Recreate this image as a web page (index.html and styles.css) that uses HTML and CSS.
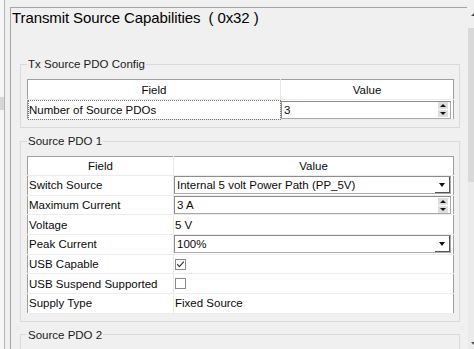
FILE: index.html
```html
<!DOCTYPE html>
<html lang="en">
<head>
    <meta charset="UTF-8">
    <meta name="viewport" content="width=device-width, initial-scale=1.0">
    <title>Transmit Source Capabilities</title>
    <link rel="stylesheet" href="styles.css">
</head>
<body>
    <div class="app">
        <div class="side"><div class="side-sel"></div></div>
        <div class="panel">
            <div class="title">Transmit Source Capabilities  ( 0x32 )</div>

            <fieldset class="group">
                <legend>Tx Source PDO Config</legend>
                <table class="grid grid-config">
                    <tr class="head"><th class="col-field">Field</th><th>Value</th></tr>
                    <tr>
                        <td class="focus">Number of Source PDOs</td>
                        <td class="ctl">
                            <div class="spin">
                                <span class="spin-text">3</span>
                                <span class="spin-btns"><span class="spin-up"></span><span class="spin-down"></span></span>
                            </div>
                        </td>
                    </tr>
                </table>
            </fieldset>

            <fieldset class="group group-next">
                <legend>Source PDO 1</legend>
                <table class="grid grid-pdo">
                    <tr class="head"><th class="col-field">Field</th><th>Value</th></tr>
                    <tr>
                        <td>Switch Source</td>
                        <td class="ctl">
                            <div class="combo">
                                <span class="combo-text">Internal 5 volt Power Path (PP_5V)</span>
                                <span class="combo-btn"></span>
                            </div>
                        </td>
                    </tr>
                    <tr>
                        <td>Maximum Current</td>
                        <td class="ctl">
                            <div class="spin">
                                <span class="spin-text">3 A</span>
                                <span class="spin-btns"><span class="spin-up"></span><span class="spin-down"></span></span>
                            </div>
                        </td>
                    </tr>
                    <tr><td>Voltage</td><td class="val">5 V</td></tr>
                    <tr>
                        <td>Peak Current</td>
                        <td class="ctl">
                            <div class="combo">
                                <span class="combo-text">100%</span>
                                <span class="combo-btn"></span>
                            </div>
                        </td>
                    </tr>
                    <tr>
                        <td>USB Capable</td>
                        <td class="val">
                            <svg class="check" width="11" height="11" viewBox="0 0 11 11">
                                <rect x="0.5" y="0.5" width="10" height="10" fill="#fff" stroke="#8a8a8a"/>
                                <polyline points="2.2,5.2 4.4,7.6 8.8,2.6" fill="none" stroke="#333" stroke-width="1.2"/>
                            </svg>
                        </td>
                    </tr>
                    <tr>
                        <td>USB Suspend Supported</td>
                        <td class="val">
                            <svg class="check" width="11" height="11" viewBox="0 0 11 11">
                                <rect x="0.5" y="0.5" width="10" height="10" fill="#fff" stroke="#8a8a8a"/>
                            </svg>
                        </td>
                    </tr>
                    <tr><td>Supply Type</td><td class="val">Fixed Source</td></tr>
                </table>
            </fieldset>

            <fieldset class="group group-next">
                <legend>Source PDO 2</legend>
            </fieldset>
        </div>
        <div class="scrollbar">
            <div class="sb-up"></div>
            <div class="sb-thumb"></div>
            <div class="sb-track"></div>
            <div class="sb-down"></div>
        </div>
    </div>
</body>
</html>
```

FILE: styles.css
```css
body{
    margin: 0;
    background-color: #f0f0f0;
    font-family: "Liberation Sans", Arial, sans-serif;
    font-size: 11.5px;
    color: #0a0a0a;
    overflow: hidden;
}
.app{
    display: flex;
    height: 349px;
    overflow: hidden;
}
.side{
    width: 4px;
    background-color: #f6f6f6;
    border-right: 1px solid #b4b4b4;
}
.side-sel{
    margin-top: 97px;
    height: 13px;
    background-color: #d6d6d6;
}
.panel{
    flex: 1;
    margin: 7px 0 0 5px;
    border-left: 1px solid #a6a6a6;
    border-top: 1px solid #a6a6a6;
    min-width: 0;
}
.title{
    height: 20px;
    line-height: 20px;
    padding-left: 1px;
    font-size: 15px;
    letter-spacing: -0.1px;
    color: #000;
    white-space: pre;
}
.group{
    margin: 29px 7px 0 9px;
    padding: 8px 5px 7px 6px;
    border: 1px solid #dadada;
    min-width: 0;
}
.group-next{
    margin-top: 6px;
}
.group legend{
    padding: 0 1px;
    line-height: 14px;
    color: #1a1a1a;
}

.grid{
    width: 100%;
    border-collapse: collapse;
    border: 1px solid #a0a0a0;
    background-color: #fff;
}
.grid th{
    font-weight: normal;
    text-align: center;
    height: 19px;
    padding: 0;
    border-bottom: 1px solid #ececec;
}
.grid td{
    height: 19px;
    padding: 0 0 0 1px;
    border-bottom: 1px solid #ececec;
    white-space: nowrap;
}
.grid td:first-child, .grid th:first-child{
    border-right: 1px solid #efe9e4;
}
.grid-config .col-field{
    width: 252px;
}
.grid-pdo .col-field{
    width: 145px;
}
.grid-pdo th{
    height: 18px;
}
.grid td.focus{
    outline: 1px dotted #777;
    outline-offset: -1px;
}
.grid td.ctl{
    padding: 0 2px 0 0;
}
.grid td.val{
    padding-left: 1px;
}
.grid-pdo td{
    height: 18.7px;
}

.spin, .combo{
    display: flex;
    align-items: center;
    height: 18px;
    box-sizing: border-box;
    background-color: #fff;
    border: 1px solid #a9a9a9;
    border-top-color: #8c8c8c;
    border-left-color: #8c8c8c;
}
.spin-text, .combo-text{
    flex: 1;
    padding-left: 2px;
}
.spin-btns{
    display: flex;
    flex-direction: column;
    gap: 1px;
    width: 10px;
    margin-right: 2px;
}
.spin-up, .spin-down{
    height: 7px;
    background-color: #dedede;
    position: relative;
}
.spin-up::after, .spin-down::after{
    content: "";
    position: absolute;
    left: 2px;
    top: 2px;
    border-left: 3px solid transparent;
    border-right: 3px solid transparent;
}
.spin-up::after{
    border-bottom: 3px solid #111;
}
.spin-down::after{
    border-top: 3px solid #111;
}
.combo-btn{
    width: 15px;
    height: 16px;
    box-sizing: border-box;
    border-right: 1px solid #555;
    border-bottom: 1px solid #555;
    position: relative;
}
.combo-btn::after{
    content: "";
    position: absolute;
    left: 4px;
    top: 6px;
    border-left: 3px solid transparent;
    border-right: 3px solid transparent;
    border-top: 4px solid #111;
}
.check{
    display: block;
}

.scrollbar{
    width: 7px;
    display: flex;
    flex-direction: column;
}
.sb-up{
    height: 28px;
    position: relative;
}
.sb-up::after{
    content: "";
    position: absolute;
    left: 4px;
    top: 13px;
    border-left: 3px solid transparent;
    border-right: 3px solid transparent;
    border-bottom: 3px solid #444;
}
.sb-thumb{
    height: 154px;
    margin-left: 1px;
    background-color: #d9d9d9;
}
.sb-track{
    flex: 1;
    margin-left: 1px;
    background-color: #ebebeb;
}
.sb-down{
    height: 10px;
    position: relative;
    background-color: #ebebeb;
    margin-left: 1px;
}
.sb-down::after{
    content: "";
    position: absolute;
    left: 3px;
    top: 3px;
    border-left: 3px solid transparent;
    border-right: 3px solid transparent;
    border-top: 3px solid #444;
}
```
